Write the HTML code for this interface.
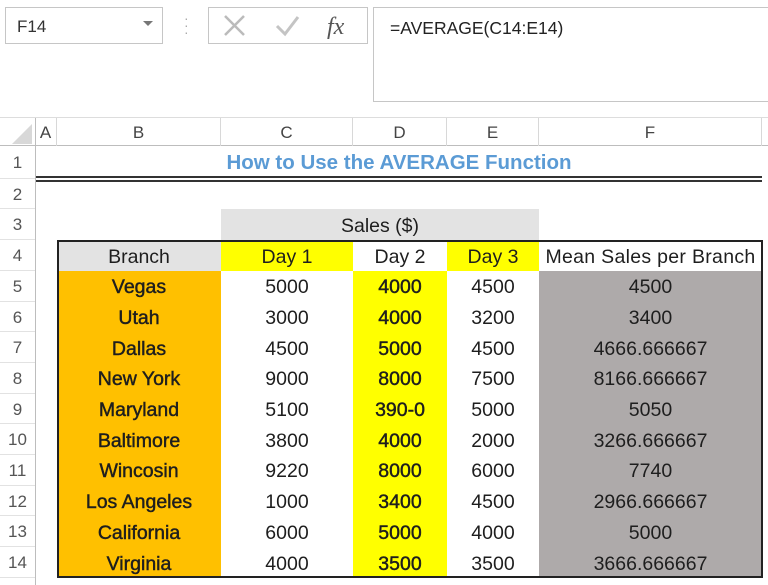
<!DOCTYPE html>
<html><head><style>
body{margin:0;width:768px;height:585px;background:#fff;position:relative;overflow:hidden;font-family:"Liberation Sans",sans-serif;color:#222}
div{position:absolute;box-sizing:border-box}
.c{display:flex;align-items:center;justify-content:center;font-size:19.5px;color:#1e1e1e;padding-top:3px;white-space:nowrap}
.b{-webkit-text-stroke:0.45px #1e1e1e}
.rh{left:0;width:35px;color:#555;font-size:17px;border-bottom:1px solid #e2e2e2;display:flex;align-items:center;justify-content:center;padding-top:2px}
.ch{top:118px;height:28px;color:#444;font-size:17px;display:flex;align-items:center;justify-content:center;border-right:1px solid #d8d8d8;padding-top:2px}
</style></head><body>
<div style="left:5px;top:7px;width:158px;height:37px;border:1px solid #c6c6c6;font-size:17px;padding:9px 0 0 11px;color:#333">F14</div>
<div style="left:143px;top:21px;width:0;height:0;border-left:5px solid transparent;border-right:5px solid transparent;border-top:5px solid #777"></div>
<div style="left:184px;top:15px;color:#aaa;font-size:14px;line-height:7px">·<br>·<br>·</div>
<div style="left:208px;top:7px;width:160px;height:37px;border:1px solid #c6c6c6"></div>
<svg style="position:absolute;left:222px;top:13px" width="140" height="26"><path d="M3 3L22 22M22 3L3 22" stroke="#bbb" stroke-width="2.5" fill="none"/><path d="M55 13L63 21L76 4" stroke="#c4c4c4" stroke-width="3" fill="none"/><text x="105" y="21" font-family="Liberation Serif" font-style="italic" font-size="24" fill="#555">fx</text></svg>
<div style="left:373px;top:7px;width:400px;height:95px;border:1px solid #c6c6c6;font-size:17.5px;padding:10px 0 0 16px;color:#222">=AVERAGE(C14:E14)</div>
<div style="left:0;top:117px;width:768px;height:1px;background:#ddd"></div>
<div style="left:0;top:145px;width:768px;height:1px;background:#bdbdbd"></div>
<svg style="position:absolute;left:12px;top:124px" width="20" height="20"><path d="M20 0L20 20L0 20Z" fill="#d8d8d8"/></svg>
<div style="left:35px;top:118px;width:1px;height:467px;background:#bdbdbd"></div>
<div class="ch" style="left:35px;width:22px">A</div>
<div class="ch" style="left:57px;width:164px">B</div>
<div class="ch" style="left:221px;width:132px">C</div>
<div class="ch" style="left:353px;width:94px">D</div>
<div class="ch" style="left:447px;width:92px">E</div>
<div class="ch" style="left:539px;width:223px">F</div>
<div class="rh" style="top:146px;height:33px">1</div>
<div class="rh" style="top:179px;height:30px">2</div>
<div class="rh" style="top:209px;height:31px">3</div>
<div class="rh" style="top:240px;height:31px">4</div>
<div class="rh" style="top:271px;height:31px">5</div>
<div class="rh" style="top:302px;height:30px">6</div>
<div class="rh" style="top:332px;height:31px">7</div>
<div class="rh" style="top:363px;height:31px">8</div>
<div class="rh" style="top:394px;height:30px">9</div>
<div class="rh" style="top:424px;height:31px">10</div>
<div class="rh" style="top:455px;height:31px">11</div>
<div class="rh" style="top:486px;height:30px">12</div>
<div class="rh" style="top:516px;height:31px">13</div>
<div class="rh" style="top:547px;height:31px">14</div>
<div class="c" style="left:36px;top:146px;width:726px;height:31px;color:#5b9bd5;font-weight:bold;font-size:20.5px">How to Use the AVERAGE Function</div>
<div style="left:36px;top:176px;width:726px;height:2px;background:#333"></div>
<div style="left:36px;top:180px;width:726px;height:2px;background:#333"></div>
<div class="c" style="left:221px;top:209px;width:318px;height:31px;background:#e3e3e3">Sales ($)</div>
<div style="left:57px;top:240px;width:164px;height:31px;background:#e3e3e3"></div>
<div style="left:221px;top:240px;width:132px;height:31px;background:#ffff00"></div>
<div style="left:447px;top:240px;width:92px;height:31px;background:#ffff00"></div>
<div style="left:57px;top:271px;width:164px;height:307px;background:#ffc000"></div>
<div style="left:353px;top:271px;width:94px;height:307px;background:#ffff00"></div>
<div style="left:539px;top:271px;width:223px;height:307px;background:#aeaaaa"></div>
<div style="left:57px;top:240px;width:706px;height:338px;border:2px solid #222"></div>
<div id="t" style="left:0;top:0"></div>
<script>
var rows=[["Branch","Day 1","Day 2","Day 3","Mean Sales per Branch"],
["Vegas","5000","4000","4500","4500"],["Utah","3000","4000","3200","3400"],["Dallas","4500","5000","4500","4666.666667"],["New York","9000","8000","7500","8166.666667"],["Maryland","5100","390-0","5000","5050"],["Baltimore","3800","4000","2000","3266.666667"],["Wincosin","9220","8000","6000","7740"],["Los Angeles","1000","3400","4500","2966.666667"],["California","6000","5000","4000","5000"],["Virginia","4000","3500","3500","3666.666667"]];
var xs=[[57,164],[221,132],[353,94],[447,92],[539,223]];var h="";
rows.forEach(function(r,i){var y=240+i*30.7;r.forEach(function(t,j){h+='<div class="c'+(i>0&&(j==0||j==2)?' b':'')+'" style="left:'+xs[j][0]+'px;top:'+y+'px;width:'+xs[j][1]+'px;height:31px;'+(j==4&&i==0?'font-size:19.5px;letter-spacing:0.3px;':'')+'">'+t+'</div>'})});
document.getElementById('t').innerHTML=h;
</script>
</body></html>
